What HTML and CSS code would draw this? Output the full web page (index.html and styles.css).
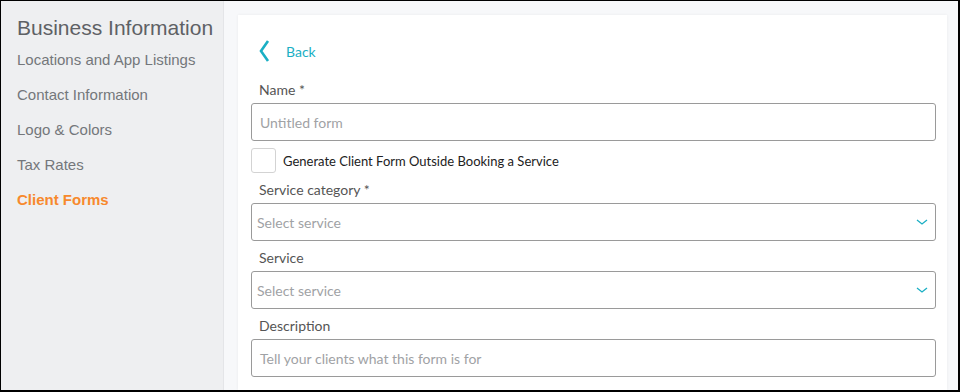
FILE: index.html
```html
<!DOCTYPE html>
<html lang="en">
<head>
  <meta charset="UTF-8">
  <title>Client Forms</title>
  <link rel="stylesheet" href="styles.css">
</head>
<body>
  <div class="frame">
    <!-- LEFT MENU -->
    <div class="sidebar">
      <h2>Business Information</h2>
      <a class="menu-item" href="#">Locations and App Listings</a>
      <a class="menu-item" href="#">Contact Information</a>
      <a class="menu-item" href="#">Logo &amp; Colors</a>
      <a class="menu-item" href="#">Tax Rates</a>
      <a class="menu-item active" href="#">Client Forms</a>
    </div>

    <!-- FORM -->
    <div class="main">
      <div class="card">
        <a class="back" href="#">
          <svg width="12" height="22" viewBox="0 0 12 22"><path d="M10 1 L3 11 L10 21" fill="none" stroke="#1aafc4" stroke-width="2.6"/></svg>
          <span>Back</span>
        </a>

        <div class="label">Name *</div>
        <div class="field"><span class="placeholder">Untitled form</span></div>

        <label class="check-row">
          <span class="checkbox"></span>
          <span>Generate Client Form Outside Booking a Service</span>
        </label>

        <div class="label">Service category *</div>
        <div class="field select">
          <span class="placeholder">Select service</span>
          <svg width="12" height="8" viewBox="0 0 12 8"><path d="M1 2 L6 6 L11 2" fill="none" stroke="#1aafc4" stroke-width="1.3"/></svg>
        </div>

        <div class="label">Service</div>
        <div class="field select">
          <span class="placeholder">Select service</span>
          <svg width="12" height="8" viewBox="0 0 12 8"><path d="M1 2 L6 6 L11 2" fill="none" stroke="#1aafc4" stroke-width="1.3"/></svg>
        </div>

        <div class="label">Description</div>
        <div class="field"><span class="placeholder">Tell your clients what this form is for</span></div>
      </div>
    </div>
  </div>
</body>
</html>
```

FILE: styles.css
```css
* {
  box-sizing: border-box;
}

body {
  margin: 0;
  background: #000;
}

.frame {
  width: 960px;
  height: 392px;
  border: 1px solid #000;
  border-right-width: 2px;
  border-bottom-width: 2px;
  display: flex;
  overflow: hidden;
}

.sidebar {
  width: 223px;
  flex-shrink: 0;
  background: #eeeff1;
  border-right: 1px solid #e4e5e8;
  padding: 14px 0 0 16px;
  font-family: "Liberation Sans", Arial, sans-serif;
}

.sidebar h2 {
  margin: 0 0 1px;
  font-size: 21px;
  font-weight: normal;
  color: #5e6165;
  line-height: 26px;
}

.menu-item {
  display: block;
  font-size: 15px;
  color: #74777b;
  text-decoration: none;
  line-height: 35px;
}

.menu-item.active {
  color: #f7892d;
  font-weight: bold;
}

.main {
  flex: 1;
  background: #f7f8fa;
  padding: 14px 11px 0 14px;
}

.card {
  background: #fff;
  height: 100%;
  box-shadow: 0 0 3px rgba(0, 0, 0, 0.06);
  padding: 25px 11px 0 13px;
  font-family: Lato, "Open Sans", sans-serif;
}

.back {
  display: flex;
  align-items: center;
  gap: 16px;
  margin-left: 7px;
  color: #1aafc4;
  text-decoration: none;
  font-size: 14px;
  height: 22px;
}

.label {
  font-size: 14px;
  color: #555;
  padding-left: 8px;
  line-height: 18px;
  margin-bottom: 4px;
}

.back + .label {
  margin-top: 19px;
}

.field {
  height: 38px;
  border: 1px solid #9a9a9a;
  border-radius: 3px;
  display: flex;
  align-items: center;
  justify-content: space-between;
  padding: 0 8px;
  margin-bottom: 8px;
}

.field.select {
  padding-left: 5px;
  padding-right: 7px;
}

.placeholder {
  font-size: 14px;
  color: #9fa2a5;
}

.check-row {
  display: flex;
  align-items: center;
  gap: 7px;
  font-size: 13px;
  color: #222;
  margin-top: -1px;
  margin-bottom: 8px;
}

.checkbox {
  width: 25px;
  height: 25px;
  border: 1px solid #d3d3d3;
  border-radius: 3px;
}
```
